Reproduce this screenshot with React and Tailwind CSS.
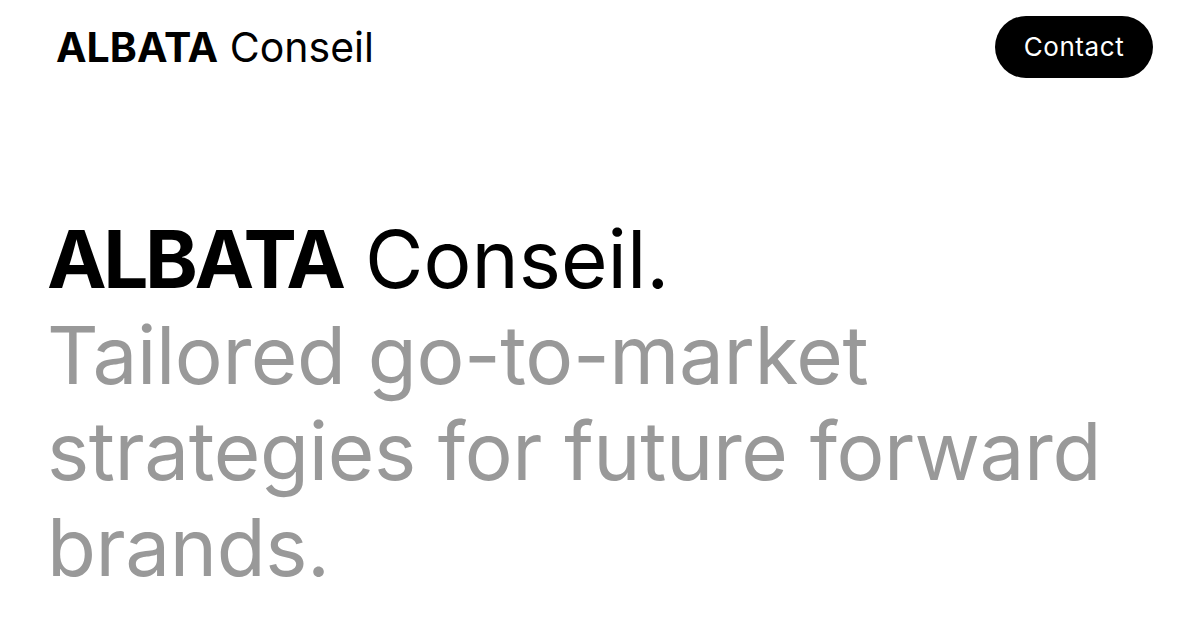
export default function App() {
  return (
    <div
      className="w-[1200px] h-[630px] bg-white overflow-hidden"
      style={{ fontFamily: "Inter, 'Noto Sans', sans-serif" }}
    >
      <header className="flex items-center justify-between pl-[56px] pr-[47px] pt-[16px]">
        <div className="text-[41px] leading-none text-black">
          <span className="font-bold">ALBATA</span> <span className="font-normal">Conseil</span>
        </div>
        <button className="h-[62px] w-[158px] rounded-full bg-black text-white text-[26px] tracking-[0.6px] leading-none flex items-center justify-center">
          Contact
        </button>
      </header>
      <section className="pl-[47px] pt-[133px]">
        <h1 className="text-[80px] leading-[96px] font-normal">
          <span className="text-black">
            <span className="font-bold tracking-[-3.5px]">ALBATA</span> Conseil.
          </span>
          <br />
          <span className="text-[#999999] tracking-[-0.4px]">
            Tailored go-to-market
            <br />
            strategies for future forward
            <br />
            brands.
          </span>
        </h1>
      </section>
    </div>
  );
}
